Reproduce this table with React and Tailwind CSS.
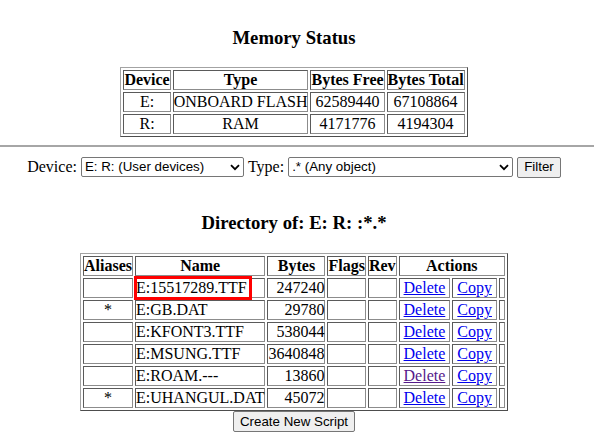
import React from 'react';

const serif = "font-['Liberation_Serif','Times_New_Roman',serif]";
const sans = "font-['Liberation_Sans',Arial,sans-serif]";

const tableCls =
  'border-separate border-spacing-[2px] border border-t-[#a3a3a3] border-l-[#a3a3a3] border-r-[#4d4d4d] border-b-[#4d4d4d] mx-auto';
const cell =
  'border border-t-[#5a5a5a] border-l-[#5a5a5a] border-r-[#8c8c8c] border-b-[#8c8c8c] p-0 leading-[18px] whitespace-nowrap';
const th = `${cell} font-bold text-center`;

const memory = [
  { dev: 'E:', type: 'ONBOARD FLASH', free: '62589440', total: '67108864' },
  { dev: 'R:', type: 'RAM', free: '4171776', total: '4194304' },
];

const files = [
  { alias: '', name: 'E:15517289.TTF', bytes: '247240', marked: true },
  { alias: '*', name: 'E:GB.DAT', bytes: '29780' },
  { alias: '', name: 'E:KFONT3.TTF', bytes: '538044' },
  { alias: '', name: 'E:MSUNG.TTF', bytes: '3640848' },
  { alias: '', name: 'E:ROAM.---', bytes: '13860', visited: true },
  { alias: '*', name: 'E:UHANGUL.DAT', bytes: '45072' },
];

const Chevron = () => (
  <svg width="10" height="7" viewBox="0 0 10 7" className="shrink-0">
    <path d="M1 1.2 L5 5.2 L9 1.2" fill="none" stroke="#000" strokeWidth="1.8" />
  </svg>
);

const FakeSelect = ({ width, value }) => (
  <div
    className={`${sans} flex items-center justify-between h-[20px] border border-[#767676] rounded-[2px] bg-white pl-[3px] pr-[3px] text-[13.33px] leading-[16px] ${width}`}
  >
    <span>{value}</span>
    <Chevron />
  </div>
);

const Button = ({ children }) => (
  <button
    className={`${sans} h-[21px] px-[6px] border border-[#767676] rounded-[2px] bg-[#efefef] text-[13.33px] leading-[16px] text-black`}
  >
    {children}
  </button>
);

export default function App() {
  return (
    <div className={`${serif} bg-white text-black text-[16px] min-h-[439px] w-[595px]`}>
      <div className="w-[588px] pt-[27px]">
        <h3 className="text-[18.72px] font-bold leading-[21px] text-center mb-[19px]">
          Memory Status
        </h3>

        <table className={tableCls}>
          <tbody>
            <tr>
              <th className={th}>Device</th>
              <th className={th}>Type</th>
              <th className={th}>Bytes Free</th>
              <th className={th}>Bytes Total</th>
            </tr>
            {memory.map((m) => (
              <tr key={m.dev}>
                <td className={`${cell} text-center`}>{m.dev}</td>
                <td className={`${cell} text-center`}>{m.type}</td>
                <td className={`${cell} text-center`}>{m.free}</td>
                <td className={`${cell} text-center`}>{m.total}</td>
              </tr>
            ))}
          </tbody>
        </table>
      </div>

      <hr className="mt-[8px] w-[594px] h-[2px] border-0 bg-[#a6a6a6]" />

      <div className="w-[588px]">
        <form className="mt-[8px] h-[24px] flex items-center justify-center gap-[4px] leading-[18px]">
          <span>Device:</span>
          <FakeSelect width="w-[163px]" value="E: R: (User devices)" />
          <span>Type:</span>
          <FakeSelect width="w-[225px]" value=".* (Any object)" />
          <Button>Filter</Button>
        </form>

        <h3 className="mt-[33px] text-[18.72px] font-bold leading-[21px] text-center mb-[20px]">
          Directory of: E: R: :*.*
        </h3>

        <table className={tableCls}>
          <tbody>
            <tr>
              <th className={th}>Aliases</th>
              <th className={th}>Name</th>
              <th className={th}>Bytes</th>
              <th className={th}>Flags</th>
              <th className={th}>Rev</th>
              <th className={th} colSpan={3}>
                Actions
              </th>
            </tr>
            {files.map((f) => (
              <tr key={f.name}>
                <td className={`${cell} text-center`}>{f.alias}</td>
                <td className={`${cell} text-left`}>
                  {f.marked ? (
                    <span className="relative inline-block">
                      {f.name}
                      <span className="absolute -left-[2px] -right-[5px] -top-[3px] -bottom-[3px] border-[3px] border-[#ff0000]" />
                    </span>
                  ) : (
                    f.name
                  )}
                </td>
                <td className={`${cell} text-right`}>{f.bytes}</td>
                <td className={cell}></td>
                <td className={cell}></td>
                <td className={cell}>
                  {'\u00a0'}
                  <a
                    href="#"
                    className={`underline ${f.visited ? 'text-[#551a8b]' : 'text-[#0000ee]'}`}
                  >
                    Delete
                  </a>
                  {'\u00a0'}
                </td>
                <td className={cell}>
                  {'\u00a0'}
                  <a href="#" className="underline text-[#0000ee]">
                    Copy
                  </a>
                  {'\u00a0'}
                </td>
                <td className={cell}>{'\u00a0'}</td>
              </tr>
            ))}
          </tbody>
        </table>

        <div className="flex justify-center">
          <Button>Create New Script</Button>
        </div>
      </div>
    </div>
  );
}
